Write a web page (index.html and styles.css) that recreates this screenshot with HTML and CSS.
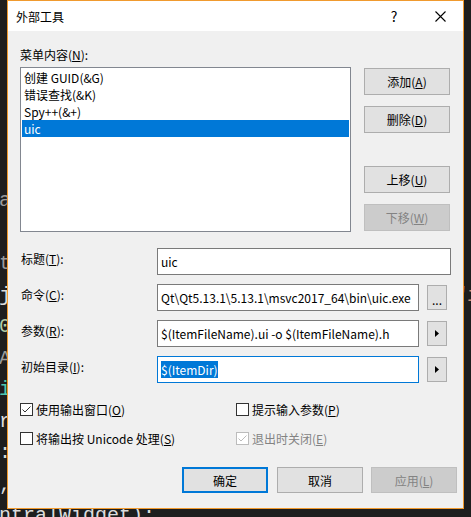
FILE: index.html
```html
<!DOCTYPE html>
<html lang="zh-CN">
<head>
<meta charset="utf-8">
<title>外部工具</title>
<link rel="stylesheet" href="styles.css">
</head>
<body>
<pre class="code"><span class="c-gray">a</span>

<span class="c-gray">t</span>
<span class="c-light">j</span>                                     <span class="c-str">"icon"</span>
<span class="c-num">0</span>
<span class="c-gray">A</span>
<span class="c-type">i</span>
<span class="c-light">r</span>
<span class="c-light">:</span>
<span class="c-light">,</span>
<span class="c-light">ntralWidget);</span></pre>

<div class="dialog">
  <div class="titlebar">
    <span class="title">外部工具</span>
    <span class="help">?</span>
    <span class="close">
      <svg width="11" height="11" viewBox="0 0 11 11"><path d="M0.5 0.5 L10.5 10.5 M10.5 0.5 L0.5 10.5" stroke="#000" stroke-width="1.1" fill="none"/></svg>
    </span>
  </div>

  <div class="content">
    <div class="top">
      <div class="listcol">
        <div class="lbl">菜单内容(<u>N</u>):</div>
        <div class="listbox">
          <div class="item">创建 GUID(&amp;G)</div>
          <div class="item">错误查找(&amp;K)</div>
          <div class="item">Spy++(&amp;+)</div>
          <div class="item sel">uic</div>
        </div>
      </div>
      <div class="sidebtns">
        <button class="btn">添加(<u>A</u>)</button>
        <button class="btn">删除(<u>D</u>)</button>
        <button class="btn spaced">上移(<u>U</u>)</button>
        <button class="btn" disabled>下移(<u>W</u>)</button>
      </div>
    </div>

    <div class="form">
      <div class="flabel">标题(<u>T</u>):</div>
      <div class="input wide">uic</div>

      <div class="flabel">命令(<u>C</u>):</div>
      <div class="input">Qt\Qt5.13.1\5.13.1\msvc2017_64\bin\uic.exe</div>
      <button class="sbtn"><span class="dots">...</span></button>

      <div class="flabel">参数(<u>R</u>):</div>
      <div class="input">$(ItemFileName).ui -o $(ItemFileName).h</div>
      <button class="sbtn"><svg width="4" height="7" viewBox="0 0 4 7"><polygon points="0,0 4,3.5 0,7" fill="#000"/></svg></button>

      <div class="flabel">初始目录(<u>I</u>):</div>
      <div class="input focus"><span class="selected">$(ItemDir)</span></div>
      <button class="sbtn"><svg width="4" height="7" viewBox="0 0 4 7"><polygon points="0,0 4,3.5 0,7" fill="#000"/></svg></button>
    </div>

    <div class="checks">
      <div class="chk">
        <span class="box"><svg width="11" height="11" viewBox="0 0 11 11"><polyline points="1.5,5.5 4,8 9.5,2.5" stroke="#333" stroke-width="1" fill="none"/></svg></span>
        <span>使用输出窗口(<u>O</u>)</span>
      </div>
      <div class="chk">
        <span class="box"></span>
        <span>提示输入参数(<u>P</u>)</span>
      </div>
      <div class="chk">
        <span class="box"></span>
        <span>将输出按 Unicode 处理(<u>S</u>)</span>
      </div>
      <div class="chk disabled">
        <span class="box"><svg width="11" height="11" viewBox="0 0 11 11"><polyline points="1.5,5.5 4,8 9.5,2.5" stroke="#bcbcbc" stroke-width="1" fill="none"/></svg></span>
        <span>退出时关闭(<u>E</u>)</span>
      </div>
    </div>

    <div class="footer">
      <button class="btn default">确定</button>
      <button class="btn cancel">取消</button>
      <button class="btn apply" disabled>应用(<u>L</u>)</button>
    </div>
  </div>
</div>
</body>
</html>
```

FILE: styles.css
```css
* {
  box-sizing: border-box;
}

html,
body {
  margin: 0;
  height: 100%;
}

body {
  background: #1e1e1e;
  overflow: hidden;
  position: relative;
}

/* code editor behind the dialog */
.code {
  margin: 0 0 0 -1px;
  padding-top: 185px;
  font-family: "Liberation Mono", monospace;
  font-size: 20px;
  line-height: 31.5px;
  color: #dcdcdc;
  white-space: pre;
}

.c-gray { color: #9b9b9b; }
.c-light { color: #dcdcdc; }
.c-str { color: #ce9178; }
.c-num { color: #b5cea8; }
.c-type { color: #4ec9b0; }

/* dialog window */
.dialog {
  position: absolute;
  left: 7px;
  top: 0;
  width: 457px;
  height: 509px;
  border: 1px solid #f09a2e;
  background: #f0f0f0;
  font-family: "Noto Sans CJK SC", "Noto Sans", sans-serif;
  font-size: 12px;
  line-height: 17px;
  color: #000;
  display: flex;
  flex-direction: column;
}

.titlebar {
  height: 30px;
  flex: none;
  background: #fff;
  display: flex;
  align-items: center;
}

.title {
  flex: 1;
  padding-left: 8px;
}

.help {
  width: 46px;
  text-align: center;
  font-size: 14px;
}

.close {
  width: 46px;
  display: flex;
  justify-content: center;
}

.content {
  padding: 15px 12px 0 12px;
}

u {
  text-decoration: underline;
  text-underline-offset: 1px;
}

/* top: list + side buttons */
.top {
  display: grid;
  grid-template-columns: 331px 86px;
  column-gap: 13px;
}

.lbl {
  height: 17px;
}

.listbox {
  margin-top: 4px;
  height: 165px;
  border: 1px solid #828790;
  background: #fff;
  padding: 1px;
}

.item {
  height: 17px;
  line-height: 17px;
  padding-left: 2px;
  white-space: nowrap;
}

.item.sel {
  background: #0078d7;
  color: #fff;
}

.sidebtns {
  display: flex;
  flex-direction: column;
  padding-top: 22px;
  gap: 11px;
}

.btn {
  height: 27px;
  border: 1px solid #adadad;
  background: #e1e1e1;
  font: inherit;
  color: #000;
  padding: 0;
  margin: 0;
}

.btn.spaced {
  margin-top: 22px;
}

.btn:disabled {
  background: #cccccc;
  border-color: #bfbfbf;
  color: #838383;
}

/* form */
.form {
  margin-top: 16px;
  display: grid;
  grid-template-columns: 137px 262px 32px;
  grid-auto-rows: 27px;
  row-gap: 9px;
}

.flabel {
  padding: 2px 0 0 1px;
  white-space: nowrap;
}

.input {
  border: 1px solid #7a7a7a;
  background: #fff;
  padding: 0 3px;
  display: flex;
  align-items: center;
  white-space: nowrap;
  overflow: hidden;
}

.input.wide {
  grid-column: 2 / 4;
}

.input.focus {
  border-color: #0078d7;
}

.selected {
  background: #0078d7;
  color: #fff;
}

.sbtn {
  width: 20px;
  height: 25px;
  margin: 0 0 0 8px;
  align-self: center;
  border: 1px solid #adadad;
  background: #e1e1e1;
  padding: 0;
  display: flex;
  align-items: center;
  justify-content: center;
  font: inherit;
  color: #000;
}

.dots {
  line-height: 1;
  padding-top: 5px;
}

/* checkboxes */
.checks {
  margin-top: 18px;
  display: grid;
  grid-template-columns: 216px 1fr;
  row-gap: 12px;
}

.chk {
  display: flex;
  align-items: center;
  height: 17px;
  gap: 3px;
  white-space: nowrap;
}

.box {
  width: 13px;
  height: 13px;
  border: 1px solid #333;
  background: #fff;
  display: flex;
  align-items: center;
  justify-content: center;
  flex: none;
}

.chk.disabled {
  color: #838383;
}

.chk.disabled .box {
  border-color: #bcbcbc;
}

/* footer buttons */
.footer {
  display: flex;
  justify-content: flex-end;
  margin-top: 20px;
  margin-right: -6px;
}

.footer .btn {
  width: 86px;
  height: 26px;
}

.footer .cancel {
  margin-left: 9px;
}

.footer .apply {
  margin-left: 8px;
}

.btn.default {
  border: 2px solid #0078d7;
}
```
